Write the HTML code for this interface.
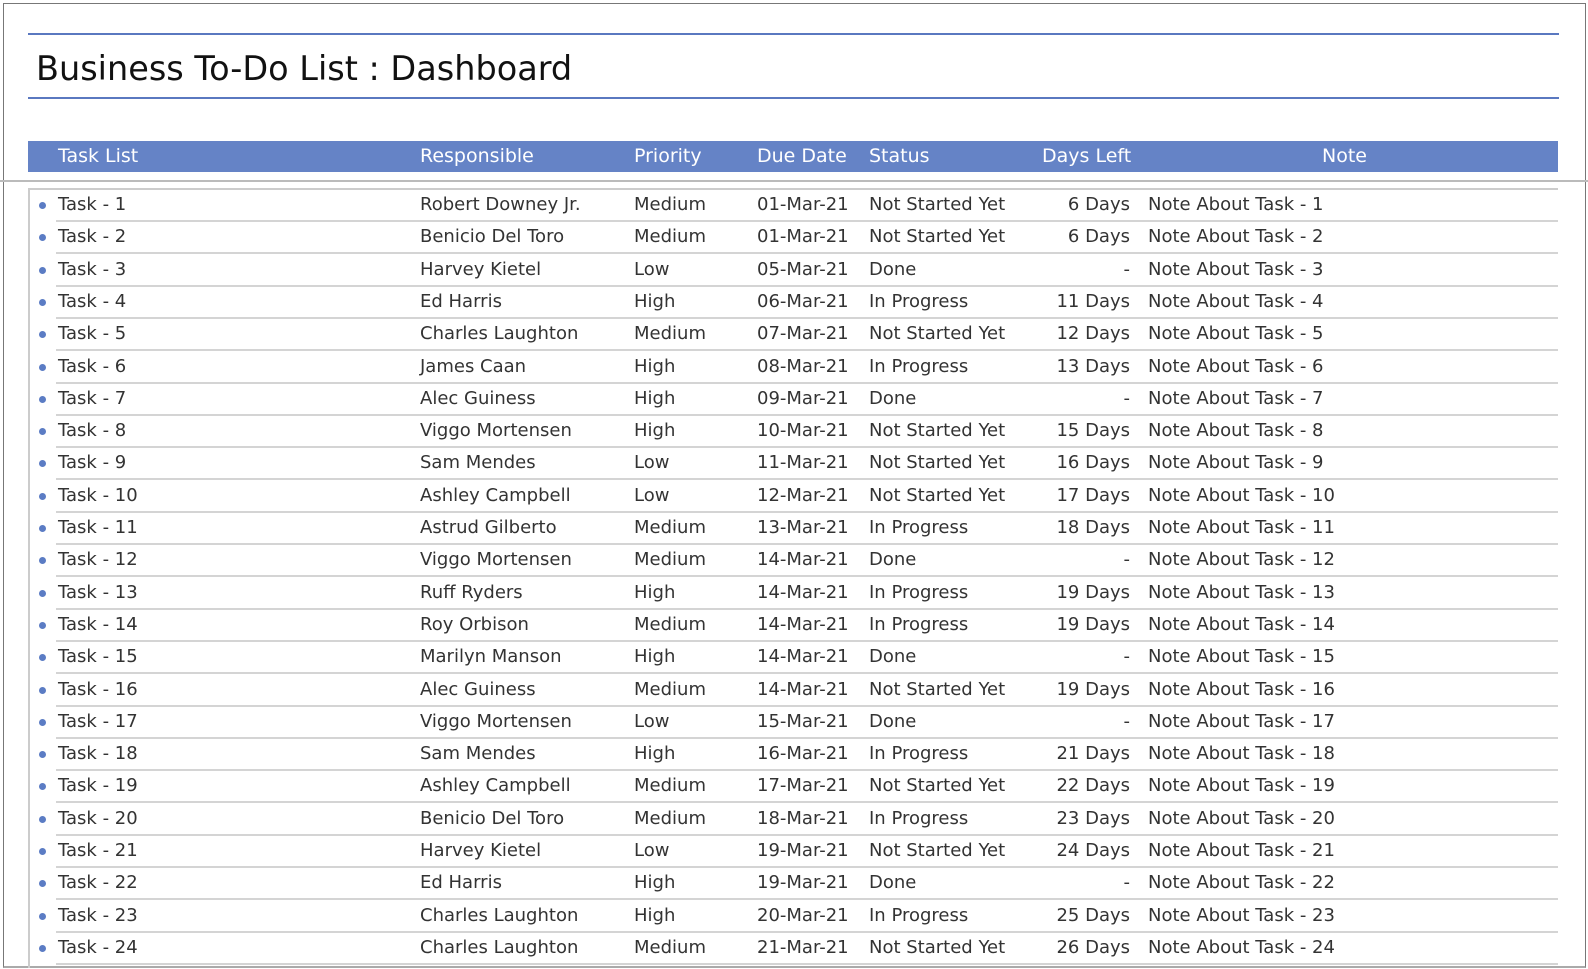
<!DOCTYPE html>
<html><head><style>
body{margin:0;width:1588px;height:969px;background:#fff;position:relative;overflow:hidden;font-family:"DejaVu Sans","Liberation Sans",sans-serif;color:#333;}
.a{position:absolute;}
.r{position:absolute;left:0;width:1588px;height:32px;font-size:18px;}
.r span{position:absolute;top:0;line-height:32px;white-space:nowrap;}
.r .b{left:39px;top:13px;width:7px;height:7px;border-radius:50%;background:#5b7cc4;}
.r .ln{position:absolute;left:56px;width:1502px;top:31px;height:2px;background:#d4d4d4;}
</style></head><body>
<div class="a" style="left:3px;top:3px;width:1581px;height:962px;border:1px solid #777;border-bottom:2px solid #aaa"></div>
<div class="a" style="left:28px;top:33px;width:1531px;height:2px;background:#5a78c0"></div>
<div class="a" style="left:36px;top:49px;font-size:33.5px;color:#111;line-height:40px">Business To-Do List : Dashboard</div>
<div class="a" style="left:28px;top:97px;width:1531px;height:2px;background:#5a78c0"></div>
<div class="a" style="left:28px;top:141px;width:1530px;height:31px;background:#6583c6;color:#fff;font-size:19px;line-height:31px;">
<span class="a" style="left:30px">Task List</span><span class="a" style="left:392px">Responsible</span><span class="a" style="left:606px">Priority</span><span class="a" style="left:729px">Due Date</span><span class="a" style="left:841px">Status</span><span class="a" style="left:1014px">Days Left</span><span class="a" style="left:1294px">Note</span></div>
<div class="a" style="left:0;top:180px;width:1588px;height:2px;background:#bbb"></div>
<div class="a" style="left:28px;top:188px;width:1530px;height:2px;background:#ccc"></div>
<div class="a" style="left:28px;top:188px;width:2px;height:780px;background:#ccc"></div>
<div id="rows"></div>
<script>
var d=[["Robert Downey Jr.","Medium","01-Mar-21","Not Started Yet","6 Days"],["Benicio Del Toro","Medium","01-Mar-21","Not Started Yet","6 Days"],["Harvey Kietel","Low","05-Mar-21","Done","-"],["Ed Harris","High","06-Mar-21","In Progress","11 Days"],["Charles Laughton","Medium","07-Mar-21","Not Started Yet","12 Days"],["James Caan","High","08-Mar-21","In Progress","13 Days"],["Alec Guiness","High","09-Mar-21","Done","-"],["Viggo Mortensen","High","10-Mar-21","Not Started Yet","15 Days"],["Sam Mendes","Low","11-Mar-21","Not Started Yet","16 Days"],["Ashley Campbell","Low","12-Mar-21","Not Started Yet","17 Days"],["Astrud Gilberto","Medium","13-Mar-21","In Progress","18 Days"],["Viggo Mortensen","Medium","14-Mar-21","Done","-"],["Ruff Ryders","High","14-Mar-21","In Progress","19 Days"],["Roy Orbison","Medium","14-Mar-21","In Progress","19 Days"],["Marilyn Manson","High","14-Mar-21","Done","-"],["Alec Guiness","Medium","14-Mar-21","Not Started Yet","19 Days"],["Viggo Mortensen","Low","15-Mar-21","Done","-"],["Sam Mendes","High","16-Mar-21","In Progress","21 Days"],["Ashley Campbell","Medium","17-Mar-21","Not Started Yet","22 Days"],["Benicio Del Toro","Medium","18-Mar-21","In Progress","23 Days"],["Harvey Kietel","Low","19-Mar-21","Not Started Yet","24 Days"],["Ed Harris","High","19-Mar-21","Done","-"],["Charles Laughton","High","20-Mar-21","In Progress","25 Days"],["Charles Laughton","Medium","21-Mar-21","Not Started Yet","26 Days"]];
var h="";
d.forEach(function(r,i){var t=189+i*32.3;
h+='<div class="r" style="top:'+t+'px"><span class="b"></span><span style="left:58px">Task - '+(i+1)+'</span><span style="left:420px">'+r[0]+'</span><span style="left:634px">'+r[1]+'</span><span style="left:757px">'+r[2]+'</span><span style="left:869px">'+r[3]+'</span><span style="right:458px">'+r[4]+'</span><span style="left:1148px">Note About Task - '+(i+1)+'</span><div class="ln"></div></div>';});
document.getElementById("rows").innerHTML=h;
</script>
</body></html>
